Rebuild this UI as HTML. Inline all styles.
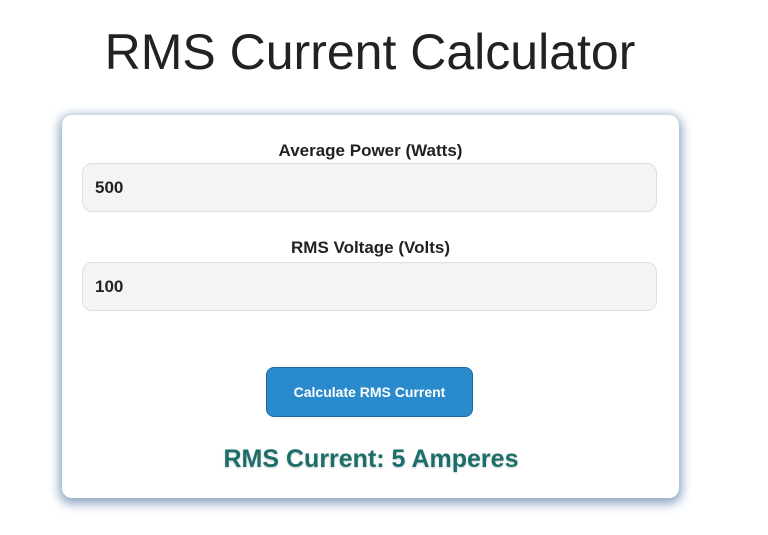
<!DOCTYPE html>
<html><head><style>
body{margin:0;width:768px;height:535px;background:#fff;font-family:"Liberation Sans",sans-serif;position:relative;overflow:hidden}
h1{position:absolute;left:0;width:740px;top:22px;margin:0;text-align:center;font-weight:normal;font-size:50px;color:#222;line-height:60px}
.card{position:absolute;left:62px;top:115px;width:617px;height:383px;background:#fff;border-radius:10px;box-shadow:0 3px 10px 3px rgba(70,110,160,.6)}
.lab{position:absolute;left:0;width:100%;text-align:center;font-weight:bold;font-size:17px;color:#222}
.inp{position:absolute;left:20px;width:575px;height:49px;background:#f3f4f6;border:1px solid #dcdfe3;border-radius:10px;box-sizing:border-box;padding-left:12px;line-height:47px;font-weight:bold;font-size:17px;color:#222}
.btn{position:absolute;left:204px;top:252px;width:207px;height:50px;background:#2a8bcc;border:1px solid #1d6aa3;border-radius:8px;box-sizing:border-box;color:#fff;font-weight:bold;font-size:14px;text-align:center;line-height:48px}
.res{position:absolute;left:0;width:618px;top:330px;text-align:center;font-weight:bold;font-size:25px;color:#1b6e6a;text-shadow:0 1px 2px rgba(0,0,0,.2)}
</style></head><body>
<h1>RMS Current Calculator</h1>
<div class="card">
<div class="lab" style="top:26px">Average Power (Watts)</div>
<div class="inp" style="top:48px">500</div>
<div class="lab" style="top:123px">RMS Voltage (Volts)</div>
<div class="inp" style="top:147px">100</div>
<div class="btn">Calculate RMS Current</div>
<div class="res">RMS Current: 5 Amperes</div>
</div>
</body></html>
